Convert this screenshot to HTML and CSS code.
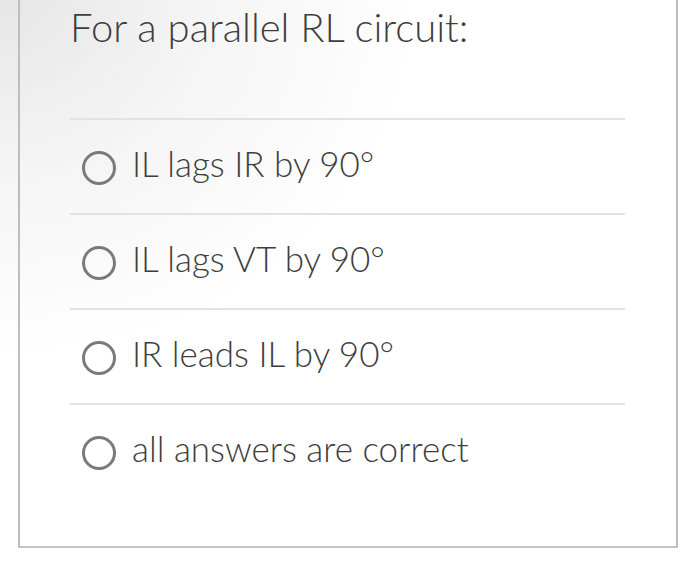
FILE: index.html
```html
<!DOCTYPE html>
<html>
<head>
<meta charset="utf-8">
<link rel="stylesheet" href="styles.css">
</head>
<body>
<div class="card">
  <h1 class="title">For a parallel RL circuit:</h1>
  <div class="options">
    <label class="option"><span class="radio"></span><span class="text">IL lags IR by 90°</span></label>
    <label class="option"><span class="radio"></span><span class="text">IL lags VT by 90°</span></label>
    <label class="option"><span class="radio"></span><span class="text">IR leads IL by 90°</span></label>
    <label class="option"><span class="radio"></span><span class="text">all answers are correct</span></label>
  </div>
</div>
</body>
</html>
```

FILE: styles.css
```css
html, body {
  margin: 0;
  padding: 0;
}
body {
  width: 700px;
  height: 562px;
  overflow: hidden;
  background: radial-gradient(ellipse 420px 360px at 0 0, #e6e6e6 0%, #f4f4f4 45%, #ffffff 100%);
  font-family: "Lato Light", "Lato", "Liberation Sans", sans-serif;
  font-weight: 300;
  color: #3d3d3d;
}
.card {
  margin-left: 18px;
  width: 660px;
  height: 548px;
  border-left: 2px solid #bdbdbd;
  border-right: 2px solid #bdbdbd;
  border-bottom: 2px solid #c4c4c4;
  padding: 0 51px 0 50px;
  box-sizing: border-box;
}
.title {
  margin: 0;
  padding-top: 3px;
  font-size: 40px;
  line-height: 48px;
  font-weight: 300;
  color: #3d3d3d;
  height: 118px;
  box-sizing: border-box;
}
.options {
  display: flex;
  flex-direction: column;
}
.option {
  display: flex;
  align-items: center;
  height: 95px;
  border-top: 2px solid #e2e2e2;
  box-sizing: border-box;
  padding-left: 12px;
}
.radio {
  width: 34px;
  height: 34px;
  border: 3.5px solid #7a7a7a;
  border-radius: 50%;
  box-sizing: border-box;
  flex: none;
  margin-top: 2px;
}
.text {
  margin-left: 16px;
  font-size: 35px;
  line-height: 44px;
  padding-bottom: 8px;
  color: #3d3d3d;
}
```
